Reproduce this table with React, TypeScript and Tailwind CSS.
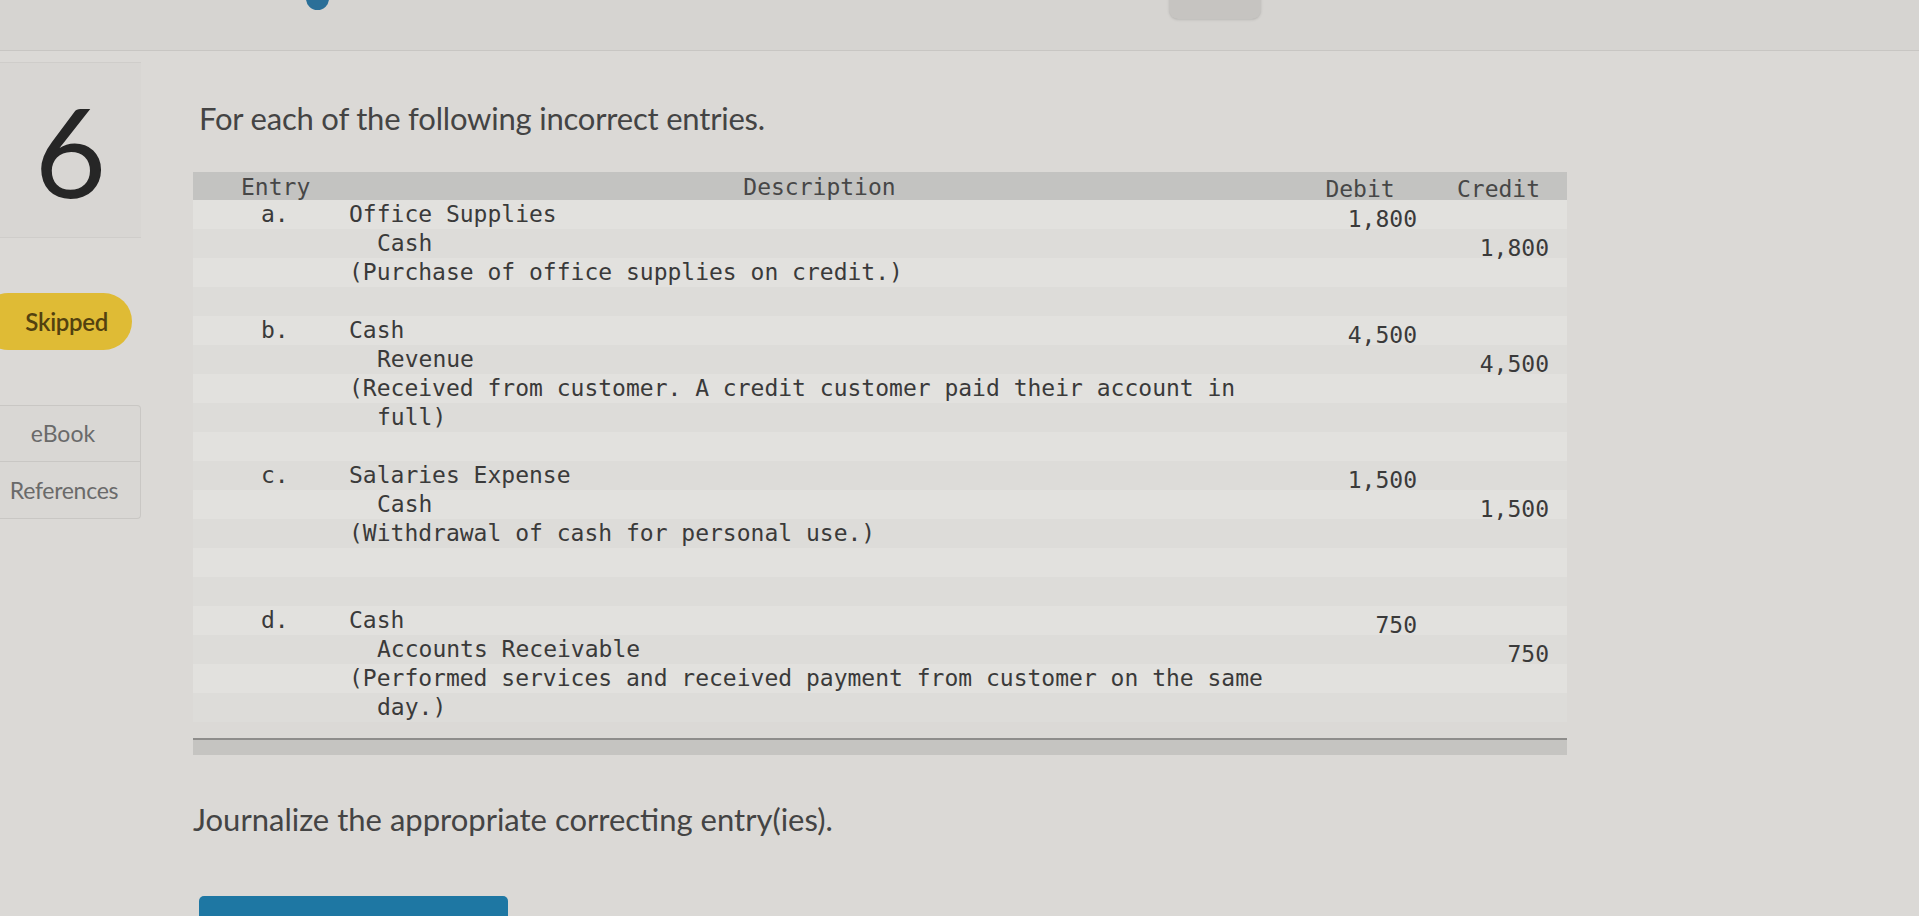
import React from 'react';

type Line = { text: string; indent?: boolean; debit?: string; credit?: string };
type Entry = { letter: string; lines: Line[]; blank: number };

const entries: Entry[] = [
  {
    letter: 'a.',
    lines: [
      { text: 'Office Supplies', debit: '1,800' },
      { text: 'Cash', indent: true, credit: '1,800' },
      { text: '(Purchase of office supplies on credit.)' },
    ],
    blank: 1,
  },
  {
    letter: 'b.',
    lines: [
      { text: 'Cash', debit: '4,500' },
      { text: 'Revenue', indent: true, credit: '4,500' },
      { text: '(Received from customer. A credit customer paid their account in' },
      { text: 'full)', indent: true },
    ],
    blank: 1,
  },
  {
    letter: 'c.',
    lines: [
      { text: 'Salaries Expense', debit: '1,500' },
      { text: 'Cash', indent: true, credit: '1,500' },
      { text: '(Withdrawal of cash for personal use.)' },
    ],
    blank: 2,
  },
  {
    letter: 'd.',
    lines: [
      { text: 'Cash', debit: '750' },
      { text: 'Accounts Receivable', indent: true, credit: '750' },
      { text: '(Performed services and received payment from customer on the same' },
      { text: 'day.)', indent: true },
    ],
    blank: 0,
  },
];

function Row({ letter, line, odd }: { letter?: string; line?: Line; odd: boolean }) {
  return (
    <div
      className={`grid h-[29px] grid-cols-[156px_941px_140px_137px] leading-[29px] ${
        odd ? 'bg-[#dddcd9]' : 'bg-[#e2e1de]'
      }`}
    >
      <div className="pl-[68px]">{letter}</div>
      <div className={`whitespace-pre ${line?.indent ? 'pl-[28px]' : ''}`}>{line?.text}</div>
      <div className="pr-[13px] text-right leading-[39px]">{line?.debit}</div>
      <div className="pr-[18px] text-right leading-[39px]">{line?.credit}</div>
    </div>
  );
}

export default function App() {
  let n = 0;
  return (
    <div className="h-[916px] w-full overflow-hidden bg-[#dbd9d6] font-['Lato',sans-serif]">
      {/* scrolled-off top bar */}
      <header className="flex h-[51px] items-start border-b border-[#c8c6c3] bg-[#d6d4d1]">
        <div className="-mt-[17px] ml-[306px] h-[27px] w-[23px] rounded-full bg-[#2b6f98]" />
        <div className="-mt-[11px] ml-[840px] h-[30px] w-[92px] rounded-[9px] bg-[#c6c4c1] shadow-sm" />
      </header>

      <div className="flex">
        <aside className="w-[141px] shrink-0 pt-[11px]">
          <div className="flex h-[176px] items-center justify-center border-y border-[#cfcdca] bg-[#d8d6d3]">
            <span className="text-[124px] font-normal leading-none text-[#262626]">6</span>
          </div>
          <div className="mt-[55px] -ml-[20px] flex h-[57px] w-[152px] items-center justify-end rounded-full bg-[#dfbb35] pr-[24px]">
            <span className="text-[24px] font-semibold tracking-[-0.3px] text-[#53410f]">Skipped</span>
          </div>
          <div className="mt-[55px] flex h-[57px] items-center justify-center border-y border-r border-[#c9c7c4] bg-[#d9d7d4] rounded-tr-[4px] pr-[14px]">
            <span className="text-[23px] text-[#6a6a6a]">eBook</span>
          </div>
          <div className="flex h-[57px] items-center justify-center border-b border-r border-[#c9c7c4] bg-[#d9d7d4] rounded-br-[4px] pr-[12px]">
            <span className="text-[23px] tracking-[-0.3px] text-[#6a6a6a]">References</span>
          </div>
        </aside>

        <main className="pl-[52px]">
          <p className="mt-[49px] pl-[6px] text-[31px] leading-[36px] tracking-[-0.2px] text-[#444]">
            For each of the following incorrect entries.
          </p>

          <div className="mt-[36px] w-[1374px] font-['DejaVu_Sans_Mono',monospace] text-[23px] text-[#3a3a3a]">
            <div className="grid h-[28px] grid-cols-[156px_941px_140px_137px] bg-[#c3c3c1] leading-[30px] text-[#474747]">
              <div className="pl-[48px]">Entry</div>
              <div className="text-center">Description</div>
              <div className="text-center leading-[34px]">Debit</div>
              <div className="text-center leading-[34px]">Credit</div>
            </div>
            {entries.map((e) => (
              <div key={e.letter}>
                {e.lines.map((l, i) => (
                  <Row key={i} letter={i === 0 ? e.letter : undefined} line={l} odd={n++ % 2 === 1} />
                ))}
                {Array.from({ length: e.blank }).map((_, i) => (
                  <Row key={'b' + i} odd={n++ % 2 === 1} />
                ))}
              </div>
            ))}
            <div className="mt-[16px] h-[17px] border-t-2 border-[#8e8d8b] bg-[#c5c4c1]" />
          </div>

          <p className="mt-[46px] text-[31px] leading-[36px] text-[#444]">
            Journalize the appropriate correcting entry(ies).
          </p>
          <div className="mt-[59px] ml-[6px] h-[40px] w-[309px] rounded-t-[5px] bg-[#1e77a3]" />
        </main>
      </div>
    </div>
  );
}
